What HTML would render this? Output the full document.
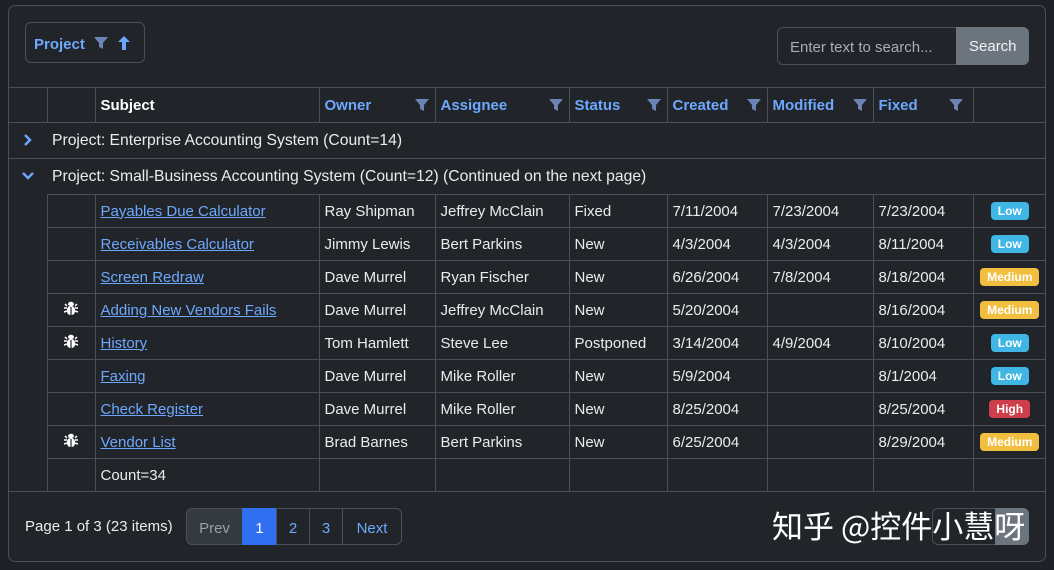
<!DOCTYPE html>
<html><head><meta charset="utf-8"><style>
*{box-sizing:border-box;margin:0;padding:0}
body{width:1054px;height:570px;background:#1e2125;font-family:"Liberation Sans","Noto Sans CJK SC",sans-serif;color:#e9ecef;position:relative;overflow:hidden;font-size:15px}
.panel{position:absolute;left:8px;top:5px;width:1038px;height:557px;border:1px solid #495057;border-radius:7px;background:#212529}
.chip{position:absolute;left:25px;top:22px;width:120px;height:41px;border:1px solid #495057;border-radius:6px;color:#6ea8fe;font-weight:bold;font-size:15px;padding:12px 0 0 8px}
.inp{position:absolute;left:777px;top:27px;width:180px;height:38px;border:1px solid #495057;border-radius:6px 0 0 6px;color:#a7adb3;padding:11px 0 0 12px;font-size:15px}
.btn{position:absolute;left:956px;top:27px;width:73px;height:38px;background:#6c757d;border-radius:0 6px 6px 0;color:#f1f3f5;padding:11px 0 0 13px;font-size:15px}
table{position:absolute;left:8px;top:87px;border-collapse:collapse;table-layout:fixed;width:1038px}
td{border:1px solid #495057;padding:0 5px;white-space:nowrap;overflow:hidden;height:33px}
tr.h td{height:35px;color:#6ea8fe;font-weight:bold}
tr.h td.s{color:#fff}
.hc{display:flex;justify-content:space-between;align-items:center}
tr.g td{height:36px;font-size:15.7px}
td.ind{border-top:hidden;border-bottom:hidden;border-left:hidden}
td.first{border-left:hidden}
td:last-child{border-right:hidden}
a{color:#6ea8fe;text-decoration:underline}
.b{display:inline-block;color:#fff;font-weight:bold;font-size:12px;border-radius:4px;padding:2px 7px;line-height:14px}
.low{background:#3fb6e3}.med{background:#f1be3f}.high{background:#cf3f4b}
.pg{position:absolute;top:508px;height:37px;border:1px solid #495057;padding-top:11px;text-align:center;font-size:15px;color:#6ea8fe}
</style></head><body>
<div class="panel"></div>
<div class="chip">Project <svg width="16" height="16" viewBox="0 0 16 16" style="vertical-align:-2px;margin-left:4px"><path d="M1 2h14l-5 6v6l-4-2V8z" fill="#6c84b5"/></svg> <svg width="14" height="16" viewBox="0 0 14 16" style="vertical-align:-2px;margin-left:4px"><path d="M7 1L1 7h4v8h4V7h4z" fill="#6ea8fe"/></svg></div>
<div class="inp">Enter text to search...</div>
<div class="btn">Search</div>
<table>
<colgroup><col style="width:39px"><col style="width:48px"><col style="width:224px"><col style="width:116px"><col style="width:134px"><col style="width:98px"><col style="width:100px"><col style="width:106px"><col style="width:100px"><col style="width:73px"></colgroup>
<tr class="h"><td class="first"></td><td></td><td class="s">Subject</td>
<td><div class="hc">Owner<svg width="16" height="16" viewBox="0 0 16 16"><path d="M1 2h14l-5 6v6l-4-2V8z" fill="#6c84b5"/></svg></div></td>
<td><div class="hc">Assignee<svg width="16" height="16" viewBox="0 0 16 16"><path d="M1 2h14l-5 6v6l-4-2V8z" fill="#6c84b5"/></svg></div></td>
<td><div class="hc">Status<svg width="16" height="16" viewBox="0 0 16 16"><path d="M1 2h14l-5 6v6l-4-2V8z" fill="#6c84b5"/></svg></div></td>
<td><div class="hc">Created<svg width="16" height="16" viewBox="0 0 16 16"><path d="M1 2h14l-5 6v6l-4-2V8z" fill="#6c84b5"/></svg></div></td>
<td><div class="hc">Modified<svg width="16" height="16" viewBox="0 0 16 16"><path d="M1 2h14l-5 6v6l-4-2V8z" fill="#6c84b5"/></svg></div></td>
<td><div class="hc" style="padding-right:4px">Fixed<svg width="16" height="16" viewBox="0 0 16 16"><path d="M1 2h14l-5 6v6l-4-2V8z" fill="#6c84b5"/></svg></div></td><td></td></tr>
<tr class="g"><td colspan="10" class="first" style="padding-left:14px"><svg width="12" height="12" viewBox="0 0 12 12" style="vertical-align:-1px;margin-right:18px"><path d="M3 1l5 5-5 5" stroke="#6ea8fe" stroke-width="2.4" fill="none"/></svg>Project: Enterprise Accounting System (Count=14)</td></tr>
<tr class="g"><td colspan="10" class="first" style="padding-left:13px"><svg width="14" height="12" viewBox="0 0 14 12" style="vertical-align:-1px;margin-right:17px"><path d="M2 3l5 5 5-5" stroke="#6ea8fe" stroke-width="2.4" fill="none"/></svg>Project: Small-Business Accounting System (Count=12) (Continued on the next page)</td></tr>
<tr><td class="ind"></td><td></td><td><a>Payables Due Calculator</a></td><td>Ray Shipman</td><td>Jeffrey McClain</td><td>Fixed</td><td>7/11/2004</td><td>7/23/2004</td><td>7/23/2004</td><td style="text-align:center"><span class="b low">Low</span></td></tr>
<tr><td class="ind"></td><td></td><td><a>Receivables Calculator</a></td><td>Jimmy Lewis</td><td>Bert Parkins</td><td>New</td><td>4/3/2004</td><td>4/3/2004</td><td>8/11/2004</td><td style="text-align:center"><span class="b low">Low</span></td></tr>
<tr><td class="ind"></td><td></td><td><a>Screen Redraw</a></td><td>Dave Murrel</td><td>Ryan Fischer</td><td>New</td><td>6/26/2004</td><td>7/8/2004</td><td>8/18/2004</td><td style="text-align:center"><span class="b med">Medium</span></td></tr>
<tr><td class="ind"></td><td style="text-align:center"><svg width="16" height="16" viewBox="0 0 16 16"><ellipse cx="8" cy="4" rx="3" ry="2.2" fill="#fff"/><rect x="4" y="6" width="8" height="9" rx="3.5" fill="#fff"/><path d="M1 8h3M12 8h3M1 12l3-1M15 12l-3-1M2 4l2 2M14 4l-2 2" stroke="#fff" stroke-width="1.5"/><path d="M8 7v8" stroke="#212529" stroke-width="1.2"/></svg></td><td><a>Adding New Vendors Fails</a></td><td>Dave Murrel</td><td>Jeffrey McClain</td><td>New</td><td>5/20/2004</td><td></td><td>8/16/2004</td><td style="text-align:center"><span class="b med">Medium</span></td></tr>
<tr><td class="ind"></td><td style="text-align:center"><svg width="16" height="16" viewBox="0 0 16 16"><ellipse cx="8" cy="4" rx="3" ry="2.2" fill="#fff"/><rect x="4" y="6" width="8" height="9" rx="3.5" fill="#fff"/><path d="M1 8h3M12 8h3M1 12l3-1M15 12l-3-1M2 4l2 2M14 4l-2 2" stroke="#fff" stroke-width="1.5"/><path d="M8 7v8" stroke="#212529" stroke-width="1.2"/></svg></td><td><a>History</a></td><td>Tom Hamlett</td><td>Steve Lee</td><td>Postponed</td><td>3/14/2004</td><td>4/9/2004</td><td>8/10/2004</td><td style="text-align:center"><span class="b low">Low</span></td></tr>
<tr><td class="ind"></td><td></td><td><a>Faxing</a></td><td>Dave Murrel</td><td>Mike Roller</td><td>New</td><td>5/9/2004</td><td></td><td>8/1/2004</td><td style="text-align:center"><span class="b low">Low</span></td></tr>
<tr><td class="ind"></td><td></td><td><a>Check Register</a></td><td>Dave Murrel</td><td>Mike Roller</td><td>New</td><td>8/25/2004</td><td></td><td>8/25/2004</td><td style="text-align:center"><span class="b high">High</span></td></tr>
<tr><td class="ind"></td><td style="text-align:center"><svg width="16" height="16" viewBox="0 0 16 16"><ellipse cx="8" cy="4" rx="3" ry="2.2" fill="#fff"/><rect x="4" y="6" width="8" height="9" rx="3.5" fill="#fff"/><path d="M1 8h3M12 8h3M1 12l3-1M15 12l-3-1M2 4l2 2M14 4l-2 2" stroke="#fff" stroke-width="1.5"/><path d="M8 7v8" stroke="#212529" stroke-width="1.2"/></svg></td><td><a>Vendor List</a></td><td>Brad Barnes</td><td>Bert Parkins</td><td>New</td><td>6/25/2004</td><td></td><td>8/29/2004</td><td style="text-align:center"><span class="b med">Medium</span></td></tr>
<tr><td class="first"></td><td></td><td>Count=34</td><td></td><td></td><td></td><td></td><td></td><td></td><td></td></tr>
</table>
<div style="position:absolute;left:25px;top:518px;font-size:15px">Page 1 of 3 (23 items)</div>
<div class="pg" style="left:186px;width:57px;background:#343a40;color:#9aa0a6;border-radius:6px 0 0 6px">Prev</div>
<div class="pg" style="left:242px;width:35px;background:#2f6ff0;border-color:#2f6ff0;color:#fff">1</div>
<div class="pg" style="left:276px;width:34px">2</div>
<div class="pg" style="left:309px;width:34px">3</div>
<div class="pg" style="left:342px;width:60px;border-radius:0 6px 6px 0">Next</div>
<div style="position:absolute;left:932px;top:508px;width:97px;height:37px;border:1px solid #495057;border-radius:6px"></div>
<div style="position:absolute;left:995px;top:508px;width:34px;height:37px;background:#6c757d;border-radius:0 6px 6px 0"></div>
<div style="position:absolute;left:772px;top:505px;font-size:31px;color:#fff;font-family:'Noto Sans CJK SC',sans-serif;line-height:40px">知乎 @控件小慧呀</div>
</body></html>
